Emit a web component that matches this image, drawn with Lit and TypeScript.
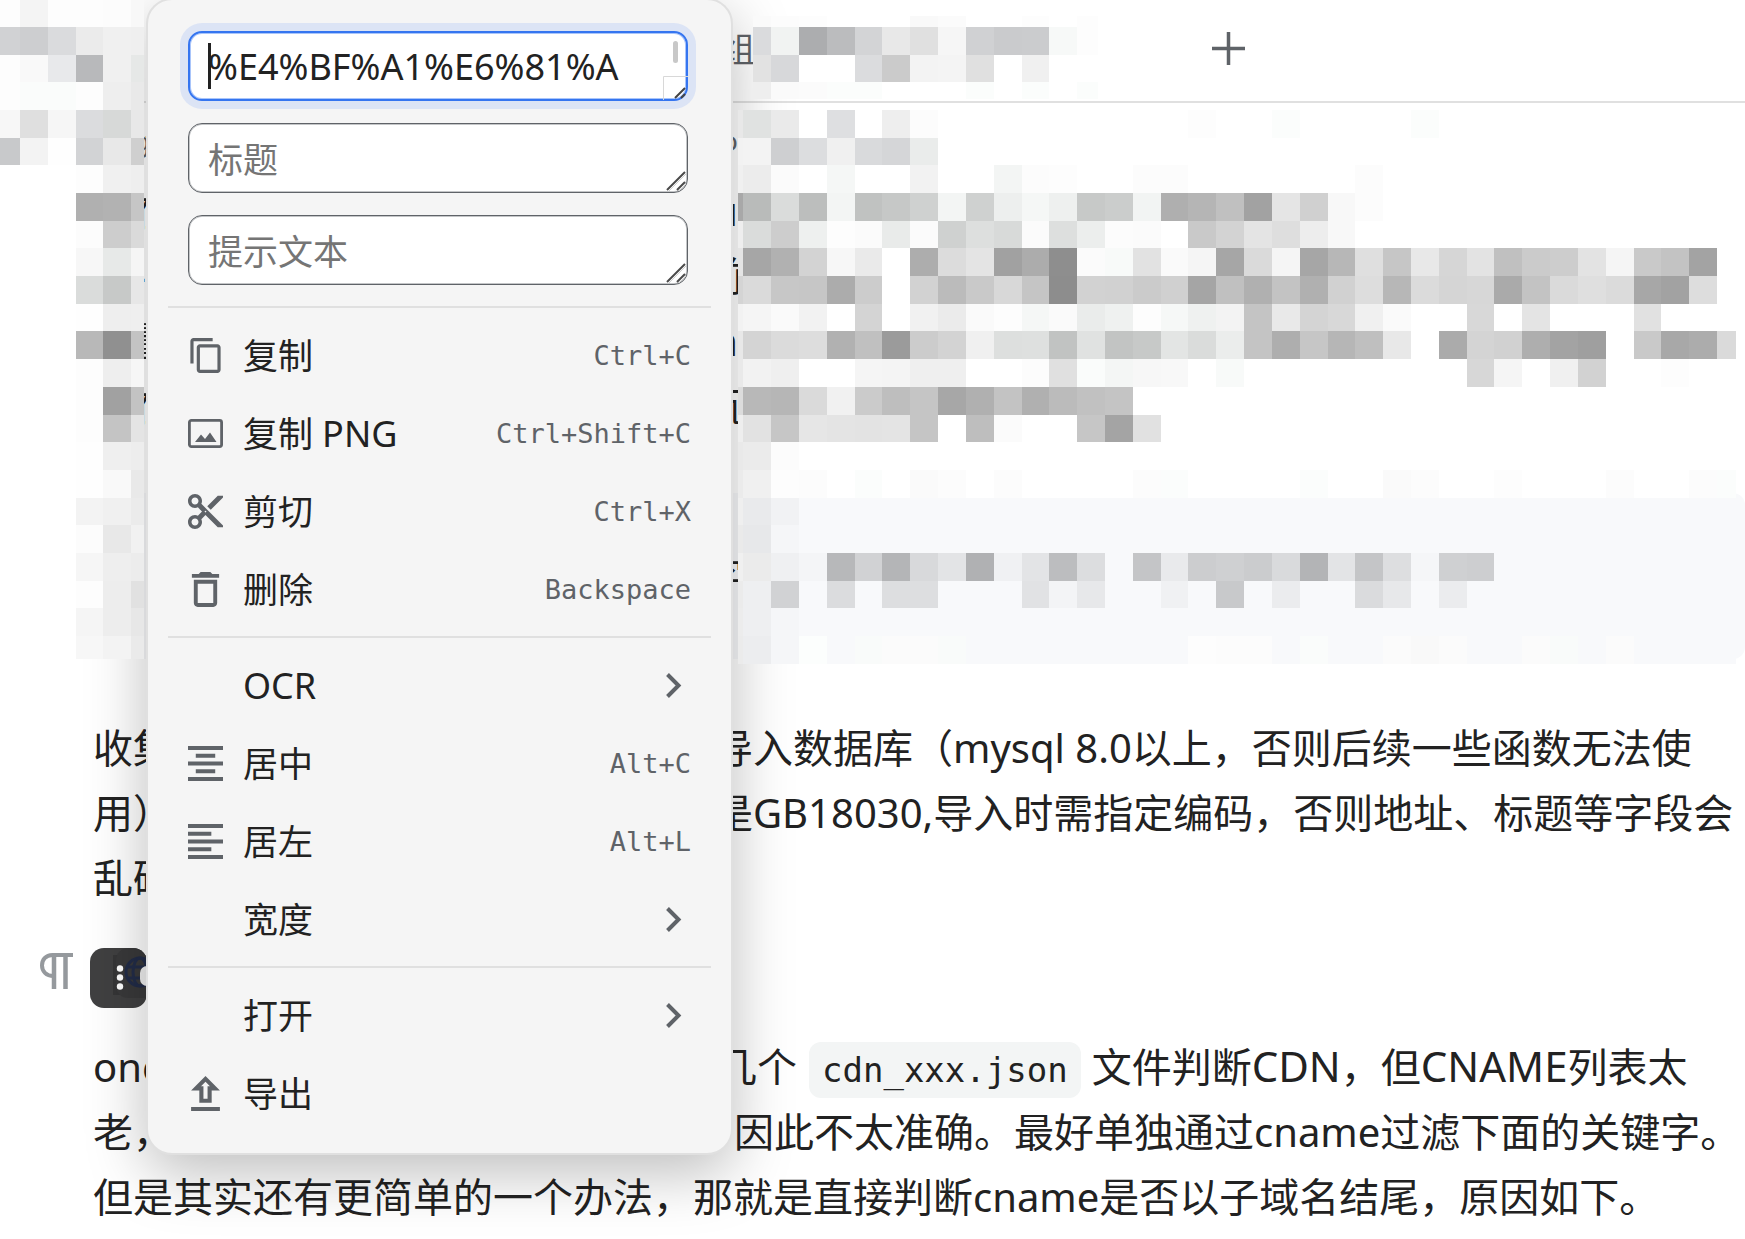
import { LitElement, html, css, svg, nothing } from "lit";
import { customElement, property } from "lit/decorators.js";

/* ---------- pixelated privacy mask ---------- */

const CELL_W = 27.82;
const CELL_H = 27.68;
const ORIGIN_X = 20;
const ORIGIN_Y = 27;

const colX = (c: number) => Math.round(ORIGIN_X + CELL_W * c);
const rowY = (r: number) => Math.round(ORIGIN_Y + CELL_H * r);

/* Each token is a grey level in hex; a trailing "g" or "b" adds a green or
   blue tint, and "-" leaves the cell in the base colour of its region. */
function tone(token: string): string {
  const v = parseInt(token.slice(0, 2), 16);
  const tint = token[2];
  if (tint === "g") return `rgb(${v},${v + 2},${v + 1})`;
  if (tint === "b") return `rgb(${v},${v + 1},${v + 3})`;
  return `rgb(${v},${v},${v})`;
}

interface Region {
  left: number;
  top: number;
  right: number;
  bottom: number;
  firstCol: number;
  firstRow: number;
  rows: string[];
}

const REGIONS: Region[] = [
  {
    left: 0, top: 0, right: 144, bottom: 659, firstCol: -1, firstRow: -1,
    rows: [
      "fd f4 fd fd fc f8",
      "d1b cdb dab eb f0 ef",
      "fd f9 e8b b8b f0 e6g",
      "fd fag fag fd ee e9",
      "f7 df f6 dbb d7g e8",
      "c8b f3 fe d2b e8 cf",
      "- - - fd f0 ee",
      "- - - b0 b2 c6",
      "- - - fc cd da",
      "- - - f7 e7g f5",
      "- - - dag c7g e7",
      "- - - fe ee ef",
      "- - - b8 90 c3",
      "- - - fd ee f6",
      "- - - fd a1 c3",
      "- - - fd c4 e4",
      "- - - fe ef ed",
      "- - - fe f9 e9",
      "- - - f3 f0 eb",
      "- - - fc e8 f1",
      "- - - f6 ee ec",
      "- - - fd ed e1",
      "- - - f5 ed e7",
      "- - - f7 f3 ea",
    ],
  },
  {
    left: 753, top: 16, right: 1098, bottom: 99, firstCol: 26, firstRow: -1,
    rows: [
      "fa fc fd - - - f9 fb - - fd - fd",
      "dab f1g acb bbb d3b e8 e0 f6 d0b cab cbb f7g fd",
      "e2 d7b - - dbb cb f3 f4 e0 - f0 - -",
      "ee fa fb fbg fbg - - - fbg - fbg - fbg",
    ],
  },
  {
    left: 738, top: 110, right: 1736, bottom: 498, firstCol: 25, firstRow: 3,
    rows: [
      "e8 e0g ea - deb - ee fc - - - - - - - - - fd - - fbg - - - - fbg",
      "f2 f3 ceb dcb f0 d9b d5b eag",
      "f0 ec fb - f5g - - f2 - - f3g fc fd - - fc fc - - - - - - fc",
      "a8 b9g dag bcg f3g c0g c6g cfg f3g cfg edg f5g eeg c7g cbg f2g af b5 c0 a2 e5 d0 f8 fc",
      "ee dag cd eeg fd fb e9g fb cfg ddg d8g fb ddg ecg fc fb - c9 d3 e4 de ed f8",
      "e4 a6 b1 d3 f7 ea - ad dc e4 a1 ac 8e fb f8g e2 fa f5 a6 da f5 a6 b7 df c6 e8 d6 e3 c0 cb cd e3 f5 c9 c3 a3",
      "d4 da c7 c6 ac cc - d2 bb c9 d8 c5 8d d2 d1 cb d0 a5 c0 b0 c3 b0 d1 dd b7 db d5 d7 aa c3 da df db a7 a2 dd",
      "f2 f5 fa f2 - d4 - f1 eb fa fd f5g fa eag efg fd f6g efg f3 c4 e9 d4 d8 f0 fa - - d8 - e4 - - - e1",
      "e8 d4 db dd b1 c0 9b cc d3 f0 ddg deg c1g e0g c2g c7g e3g dag ebg c4 ae c6 b6 bf e8 - ab d4 d1 ae a3 9f - c9 a8 ac da",
      "e9 f2 ef - - f5 f4 ef ef - - fc e0 fag f4g f7 f8 - f8g - - - - - - - - d7 f5 - f0 d2 - - fd",
      "dc b8 b6 da f1 cb be c5 a7 b0 c3 b0 bb c1 c4",
      "ee e2 c6 e6 e4 e3 e4 c5 - be fb - - c6 a4 e1",
      "e9 eb fc",
      "eb f0 fd fc - fbg - fa fc - fc - - - - fc fbg - - - - fbg - - fa fc - - fd - - - fc - - fc fbg",
    ],
  },
  {
    left: 738, top: 498, right: 1736, bottom: 664, firstCol: 25, firstRow: 17,
    rows: [
      "ef e9b f1b",
      "ea e7b f5b",
      "f0 eb efb f4b b7b d1b b4b d8b e3b b0b f0b e3b bcb dcb - c4b e9b ccb cfb cbb d9b b3b e3b c4b ddb f5b cfb cdb",
      "eb eeb d1b - dbb - ddb ddb - - - e1b f3b e7b - - f0b - c8b - ebb - - dab e7b - ebb",
      "ec eeb f5b",
      "eb ecb f5b fcg - f9g fb fb f9g - - - - - - - - fd fc fc - fag - - fb f9 fb - - fb f9g - fb",
    ],
  },
];

@customElement("pixel-mask")
class PixelMask extends LitElement {
  static styles = css`
    :host {
      position: absolute;
      left: 0;
      top: 0;
      pointer-events: none;
    }
    .cells {
      display: block;
      shape-rendering: crispEdges;
    }
  `;

  private region(r: Region, base: string) {
    return svg`
      <rect x=${r.left} y=${r.top} width=${r.right - r.left} height=${r.bottom - r.top} fill=${base}></rect>
      ${r.rows.map((line, i) =>
        line.split(" ").map((token, j) => {
          if (token === "-") return nothing;
          const x0 = Math.max(r.left, colX(r.firstCol + j));
          const x1 = Math.min(r.right, colX(r.firstCol + j + 1));
          const y0 = Math.max(r.top, rowY(r.firstRow + i));
          const y1 = Math.min(r.bottom, rowY(r.firstRow + i + 1));
          if (x1 <= x0 || y1 <= y0) return nothing;
          return svg`<rect x=${x0} y=${y0} width=${x1 - x0} height=${y1 - y0} fill=${tone(token)}></rect>`;
        })
      )}`;
  }

  render() {
    const bases = ["#ffffff", "#ffffff", "#ffffff", "#f8f9fb"];
    return html`<svg class="cells" width="1745" height="670" aria-hidden="true">
      ${REGIONS.map((r, i) => this.region(r, bases[i]))}
    </svg>`;
  }
}

/* ---------- context menu ---------- */

const icons: Record<string, unknown> = {
  copy: svg`<svg viewBox="0.5 1 22 22"><path d="M16 1H4c-1.1 0-2 .9-2 2v14h2V3h12V1zm3 4H8c-1.1 0-2 .9-2 2v14c0 1.1.9 2 2 2h11c1.1 0 2-.9 2-2V7c0-1.1-.9-2-2-2zm0 16H8V7h11v14z"/></svg>`,
  image: svg`<svg viewBox="0 0 35 35"><rect x="1.4" y="4.4" width="32.2" height="26.2" rx="2" fill="none" stroke="currentColor" stroke-width="2.8"/><path d="M7 26l6-7.500 4 4.500 5-6.500 6.500 9.500z"/></svg>`,
  cut: svg`<svg viewBox="2 2 20 20"><path d="M9.640 7.640c.23-.5.36-1.050.36-1.640 0-2.210-1.790-4-4-4S2 3.790 2 6s1.790 4 4 4c.59 0 1.140-.13 1.640-.36L10 12l-2.360 2.360C7.140 14.130 6.590 14 6 14c-2.210 0-4 1.790-4 4s1.790 4 4 4 4-1.790 4-4c0-.59-.13-1.140-.36-1.640L12 14l7 7h3v-1L9.640 7.640zM6 8c-1.100 0-2-.89-2-2s.9-2 2-2 2 .89 2 2-.9 2-2 2zm0 12c-1.100 0-2-.89-2-2s.9-2 2-2 2 .89 2 2-.9 2-2 2zm6-7.500c-.28 0-.5-.22-.5-.5s.22-.5.5-.5.5.22.5.5-.22.5-.5.5zM19 3l-6 6 2 2 7-7V3z"/></svg>`,
  trash: svg`<svg viewBox="3 3 18 18"><path d="M6 19c0 1.100.9 2 2 2h8c1.100 0 2-.9 2-2V7H6v12zM8 9h8v10H8V9zm7.500-5l-1-1h-5l-1 1H5v2h14V4z"/></svg>`,
  center: svg`<svg viewBox="3 3 18 18"><path d="M7 15v2h10v-2H7zm-4 6h18v-2H3v2zm0-8h18v-2H3v2zm4-6v2h10V7H7zM3 3v2h18V3H3z"/></svg>`,
  left: svg`<svg viewBox="3 3 18 18"><path d="M15 15H3v2h12v-2zm0-8H3v2h12V7zM3 13h18v-2H3v2zm0 8h18v-2H3v2zM3 3v2h18V3H3z"/></svg>`,
  export: svg`<svg viewBox="3.5 3 17 17"><path d="M9 16h6v-6h4l-7-7-7 7h4v6zm3-10.170L14.170 8H13v6h-2V8H9.830L12 5.830zM5 18h14v2H5v-2z"/></svg>`,
  chevron: svg`<svg viewBox="0 0 35 35"><path d="M11.500 6.500l11 11-11 11" fill="none" stroke="currentColor" stroke-width="4"/></svg>`,
};

interface Item {
  label: string;
  icon?: string;
  keys?: string;
  submenu?: boolean;
}

const GROUPS: Item[][] = [
  [
    { label: "复制", icon: "copy", keys: "Ctrl+C" },
    { label: "复制 PNG", icon: "image", keys: "Ctrl+Shift+C" },
    { label: "剪切", icon: "cut", keys: "Ctrl+X" },
    { label: "删除", icon: "trash", keys: "Backspace" },
  ],
  [
    { label: "OCR", submenu: true },
    { label: "居中", icon: "center", keys: "Alt+C" },
    { label: "居左", icon: "left", keys: "Alt+L" },
    { label: "宽度", submenu: true },
  ],
  [
    { label: "打开", submenu: true },
    { label: "导出", icon: "export" },
  ],
];

@customElement("menu-field")
class MenuField extends LitElement {
  @property() value = "";
  @property() hint = "";
  @property() name = "";
  @property({ type: Boolean, reflect: true }) active = false;

  static styles = css`
    :host {
      display: block;
      position: relative;
      height: 70px;
    }
    .box {
      display: block;
      box-sizing: border-box;
      width: 100%;
      height: 70px;
      margin: 0;
      padding: 12px 38px 8px 19px;
      border: 1px solid #5f6368;
      border-radius: 14px;
      outline: none;
      background: #fff;
      box-shadow: inset 0 0 0 1px #c4c6c8;
      color: #222;
      font: 35px/48px "Noto Sans", "Noto Sans CJK SC", sans-serif;
      resize: none;
      overflow: hidden;
      white-space: nowrap;
    }
    .box::placeholder {
      color: #757575;
      opacity: 1;
    }
    :host([active]) .box {
      padding: 10px 38px 8px 18px;
      border: 2px solid #3575f0;
      box-shadow: inset 0 0 0 1px #a9c5fa, 0 0 0 8px #dce4f5;
      font-size: 36px;
    }
    .caret {
      position: absolute;
      left: 20px;
      top: 12px;
      width: 3px;
      height: 46px;
      background: #222;
    }
    .thumb {
      position: absolute;
      right: 10px;
      top: 10px;
      width: 5px;
      height: 22px;
      border-radius: 3px;
      background: #c8c8c8;
    }
    .grip {
      position: absolute;
      right: 0;
      bottom: 0;
      width: 25px;
      height: 25px;
    }
  `;

  render() {
    return html`
      <textarea class="box" rows="1" aria-label=${this.name} placeholder=${this.hint} .value=${this.value}></textarea>
      ${this.active
        ? html`<span class="caret"></span><span class="thumb"></span>
            <svg class="grip" viewBox="0 0 25 25" aria-hidden="true">
              <path d="M.5 24V.5H25" fill="none" stroke="#d8d8d8" />
              <path d="M12 22L22 12M18 22l4-4" stroke="#444" stroke-width="2" />
            </svg>`
        : html`<svg class="grip" viewBox="0 0 25 25" aria-hidden="true">
            <path d="M4 22L22 4M14 22l8-8" stroke="#4a4a4a" stroke-width="2" />
            <path d="M6 23L23 6M16 23l7-7" stroke="#cfcfcf" />
          </svg>`}
    `;
  }
}

@customElement("context-menu")
class ContextMenu extends LitElement {
  static styles = css`
    :host {
      display: block;
      box-sizing: border-box;
      width: 587px;
      padding: 31px 0 21px;
      border: 2px solid #e0e0e0;
      border-radius: 26px;
      background: #f5f5f5;
      box-shadow: 0 18px 60px rgba(0, 0, 0, 0.26);
    }
    .fields {
      display: grid;
      gap: 22px;
      padding: 0 43px 21px 40px;
    }
    .group {
      display: flex;
      flex-direction: column;
      margin: 0 20px;
      padding: 8px 0;
      border-top: 2px solid #e0e0e0;
    }
    .group:last-child {
      padding-bottom: 0;
    }
    .item {
      display: flex;
      align-items: center;
      gap: 20px;
      height: 78px;
      margin: 0;
      padding: 0 20px;
      border: 0;
      background: none;
      color: #222;
      font: 35px/48px "Noto Sans", "Noto Sans CJK SC", sans-serif;
      text-align: left;
    }
    .icon {
      flex: none;
      display: block;
      width: 35px;
      height: 35px;
      color: #5f6368;
      fill: currentColor;
    }
    .icon svg {
      display: block;
      width: 35px;
      height: 35px;
    }
    .label {
      flex: 1;
      padding-top: 2px;
    }
    .latin {
      font-size: 36px;
    }
    .keys {
      padding-top: 1px;
      color: #5f6368;
      font: 27px/36px "DejaVu Sans Mono", monospace;
    }
  `;

  private label(text: string) {
    return text
      .split(/([A-Z]+)/)
      .map((part) => (/[A-Z]/.test(part) ? html`<span class="latin">${part}</span>` : part));
  }

  render() {
    return html`
      <div class="fields">
        <menu-field active name="图片地址" .value=${"%E4%BF%A1%E6%81%A"}></menu-field>
        <menu-field name="标题" hint="标题"></menu-field>
        <menu-field name="提示文本" hint="提示文本"></menu-field>
      </div>
      ${GROUPS.map(
        (group) => html`<div class="group" role="group">
          ${group.map(
            (item) => html`<button class="item" type="button">
              <span class="icon">${item.icon ? icons[item.icon] : nothing}</span>
              <span class="label">${this.label(item.label)}</span>
              ${item.keys ? html`<span class="keys">${item.keys}</span>` : nothing}
              ${item.submenu ? html`<span class="icon">${icons.chevron}</span>` : nothing}
            </button>`
          )}
        </div>`
      )}
    `;
  }
}

/* ---------- page ---------- */

@customElement("app-root")
class AppRoot extends LitElement {
  static styles = css`
    :host {
      display: block;
      position: relative;
      min-height: 100vh;
      overflow: hidden;
      background: #fff;
      color: #222;
      font: 40px/65px "Noto Sans", "Noto Sans CJK SC", sans-serif;
    }
    .tabs {
      display: flex;
      align-items: center;
      height: 101px;
      padding-left: 721px;
      border-bottom: 2px solid #e0e0e0;
      color: #5f6368;
      font-size: 34px;
    }
    .add {
      margin: 0 0 4px 449px;
      padding: 8px;
      border: 0;
      background: none;
      color: #5f6368;
    }
    .add svg {
      display: block;
      width: 33px;
      height: 33px;
    }
    .tab {
      margin-bottom: 2px;
    }
    .doc {
      padding-left: 93px;
    }
    .line {
      display: flex;
      white-space: nowrap;
    }
    .line > .start {
      flex: none;
      width: 620px;
    }
    .line > .mid {
      width: 624px;
    }
    .line > .wide {
      width: 641px;
    }
    .crumbs {
      height: 75px;
      align-items: center;
      color: #5f6368;
      font-size: 28px;
    }
    .indent {
      padding-left: 40px;
    }
    .indent > .start {
      width: 571px;
    }
    .tail {
      width: 34px;
      text-align: right;
    }
    .quote {
      margin-top: 55px;
      padding: 50px 0 51px 40px;
      border-radius: 12px;
      background: #f8f9fb;
    }
    .quote > .start {
      width: 571px;
    }
    p {
      margin: 0;
    }
    .first {
      margin-top: 56px;
    }
    .caps {
      font-size: 42px;
      line-height: 40px;
    }
    .block-bar {
      display: flex;
      align-items: center;
      gap: 17px;
      height: 60px;
      margin: 38px 0 26px -53px;
    }
    .mark {
      width: 33px;
      height: 36px;
      margin-bottom: 14px;
      color: #95999d;
    }
    .more {
      width: 57px;
      height: 60px;
      padding: 0;
      border: 0;
      border-radius: 14px;
      overflow: hidden;
      background: #404041;
    }
    .more svg {
      display: block;
      width: 57px;
      height: 60px;
    }
    code {
      margin: 0 11px 0 12px;
      padding: 8px 13px;
      border-radius: 12px;
      background: #f3f5f5;
      font: 34px/40px "DejaVu Sans Mono", monospace;
    }
    context-menu {
      position: absolute;
      left: 146px;
      top: -2px;
    }
  `;

  render() {
    return html`
      <header class="tabs">
        <span class="tab">组</span>
        <button class="add" type="button" aria-label="+">
          <svg viewBox="0 0 33 33"><path d="M16.500 0v33M0 16.500h33" stroke="currentColor" stroke-width="3.500" /></svg>
        </button>
      </header>
      <main class="doc">
        <div class="line crumbs indent"><span class="start">g</span><span class="tail">o</span></div>
        <div class="line indent"><span class="start">在</span><span class="tail">u</span></div>
        <div class="line indent"><span class="start">-</span><span class="tail">前</span></div>
        <div class="line indent"><span class="start">量</span><span class="tail">n</span></div>
        <div class="line indent"><span class="start">在</span><span class="tail">沉</span></div>
        <div class="line quote"><span class="start"></span><span class="tail">字</span></div>

        <p class="first">
          <span class="line"><span class="start">收集</span><span>导入数据库（mysql 8.0以上，否则后续一些函数无法使</span></span>
          <span class="line"><span class="start">用）</span><span>是GB18030,导入时需指定编码，否则地址、标题等字段会</span></span>
          <span class="line"><span class="start">乱码</span></span>
        </p>

        <div class="block-bar">
          <svg class="mark" viewBox="0 0 33 36" aria-hidden="true">
            <path d="M33 2H12.500C5.500 2 2 7 2 12.500S6 23 13.500 23" fill="none" stroke="currentColor" stroke-width="4" />
            <path d="M14 3v33M25.500 3v33" stroke="currentColor" stroke-width="4.500" />
          </svg>
          <button class="more" type="button" aria-label="⋮">
            <svg viewBox="0 0 57 60">
              <path d="M23 7h34v40H23z" fill="#353536" />
              <rect x="26" y="0" width="50" height="50" rx="12" fill="#39393a" />
              <g fill="none" stroke="#222c48" stroke-width="3">
                <circle cx="50" cy="24" r="14" />
                <ellipse cx="50" cy="24" rx="7" ry="14" />
                <path d="M37 19h24M37 30h24" />
              </g>
              <rect x="50" y="18" width="18" height="20" rx="7" fill="#f0f0f0" />
              <circle cx="30" cy="20.500" r="3.200" fill="#fff" />
              <circle cx="30" cy="29.500" r="3.200" fill="#fff" />
              <circle cx="30" cy="38.500" r="3.200" fill="#fff" />
            </svg>
          </button>
        </div>

        <p>
          <span class="line"><span class="start mid">one</span><span>几个<code>cdn_xxx.json</code>文件判断<span class="caps">CDN</span>，但<span class="caps">CNAME</span>列表太</span></span>
          <span class="line"><span class="start wide">老，</span><span>因此不太准确。最好单独通过cname过滤下面的关键字。</span></span>
          <span class="line"><span>但是其实还有更简单的一个办法，那就是直接判断cname是否以子域名结尾，原因如下。</span></span>
        </p>
      </main>
      <context-menu></context-menu>
      <pixel-mask></pixel-mask>
    `;
  }
}
